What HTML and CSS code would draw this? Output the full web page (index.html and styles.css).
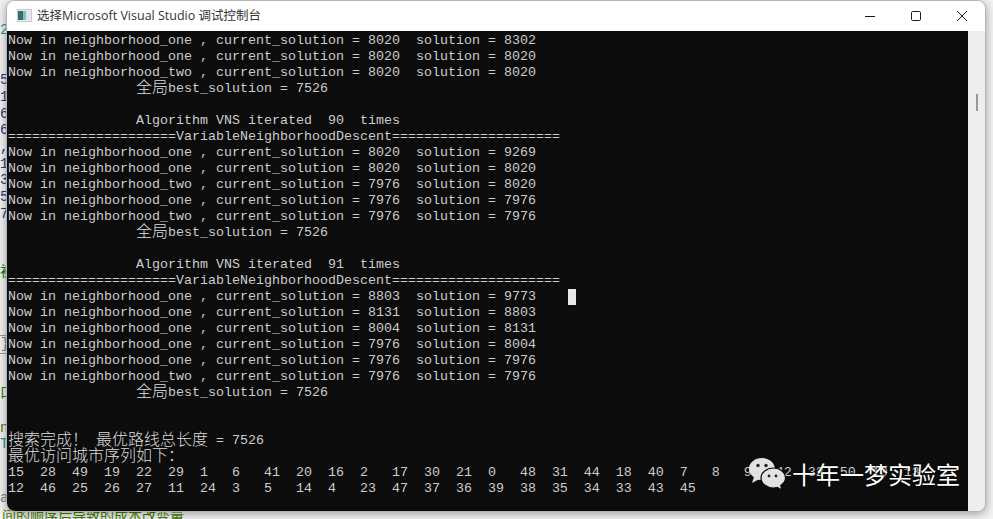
FILE: index.html
```html
<!DOCTYPE html>
<html lang="zh-CN">
<head>
<meta charset="utf-8">
<title>选择Microsoft Visual Studio 调试控制台</title>
<link rel="stylesheet" href="styles.css">
</head>
<body>
<div class="editor">
  <div class="group group-a">
    <div class="g-teal">2</div><div>&nbsp;</div><div>&nbsp;</div>
    <div class="g-navy">5</div><div class="g-navy">1</div><div class="g-navy">6</div><div class="g-navy">6</div>
    <div class="g-navy">,</div><div class="g-navy">1</div><div class="g-navy">3</div><div class="g-navy">5</div><div class="g-navy">7</div>
  </div>
  <div class="group group-b"><div class="g-green">初</div></div>
  <div class="group group-c"><div class="boxed">}</div></div>
  <div class="group group-d"><div class="g-green">口</div></div>
  <div class="group group-e"><div class="g-olive">n</div><div class="g-teal">T</div></div>
  <div class="group group-f"><div class="g-gray">a</div></div>
  <div class="group group-g"><div class="comment">间的顺序后导致的成本改变量</div></div>
</div>

<div class="window">
  <div class="titlebar">
    <svg class="app-icon" width="15" height="13" viewBox="0 0 15 13">
      <rect x="0" y="0" width="15" height="13" fill="#c9c9c9"/>
      <rect x="1" y="1" width="13" height="11" fill="#e8eef0"/>
      <rect x="1" y="2" width="5" height="9" fill="#2f6f78"/>
      <rect x="6" y="2" width="3" height="9" fill="#8fb9bc"/>
      <rect x="9" y="2" width="4" height="9" fill="#dfe8e8"/>
    </svg>
    <span class="title-text">选择Microsoft Visual Studio 调试控制台</span>
    <div class="controls">
      <svg class="ctl" width="46" height="20" viewBox="0 0 46 20"><path d="M18 10.5h10" stroke="#1a1a1a" fill="none"/></svg>
      <svg class="ctl" width="46" height="20" viewBox="0 0 46 20"><rect x="18.5" y="5.5" width="9" height="9" rx="1.2" stroke="#1a1a1a" fill="none"/></svg>
      <svg class="ctl" width="46" height="20" viewBox="0 0 46 20"><path d="M18 5l10 10M28 5L18 15" stroke="#1a1a1a" fill="none"/></svg>
    </div>
  </div>
  <div class="content">
<pre class="console">Now in neighborhood_one , current_solution = 8020  solution = 8302
Now in neighborhood_one , current_solution = 8020  solution = 8020
Now in neighborhood_two , current_solution = 8020  solution = 8020
                <span class="cjk">全局</span>best_solution = 7526

                Algorithm VNS iterated  90  times
=====================VariableNeighborhoodDescent=====================
Now in neighborhood_one , current_solution = 8020  solution = 9269
Now in neighborhood_one , current_solution = 8020  solution = 8020
Now in neighborhood_two , current_solution = 7976  solution = 8020
Now in neighborhood_one , current_solution = 7976  solution = 7976
Now in neighborhood_two , current_solution = 7976  solution = 7976
                <span class="cjk">全局</span>best_solution = 7526

                Algorithm VNS iterated  91  times
=====================VariableNeighborhoodDescent=====================
Now in neighborhood_one , current_solution = 8803  solution = 9773    <span class="cursor"> </span>
Now in neighborhood_one , current_solution = 8131  solution = 8803
Now in neighborhood_one , current_solution = 8004  solution = 8131
Now in neighborhood_one , current_solution = 7976  solution = 8004
Now in neighborhood_one , current_solution = 7976  solution = 7976
Now in neighborhood_two , current_solution = 7976  solution = 7976
                <span class="cjk">全局</span>best_solution = 7526


<span class="cjk">搜索完成！</span> <span class="cjk">最优路线总长度</span> = 7526
<span class="cjk">最优访问城市序列如下：</span>
15  28  49  19  22  29  1   6   41  20  16  2   17  30  21  0   48  31  44  18  40  7   8   9   42  32  50  10  13
12  46  25  26  27  11  24  3   5   14  4   23  47  37  36  39  38  35  34  33  43  45
</pre>
    <div class="scrollbar"><div class="thumb"></div></div>
  </div>
  <div class="watermark">
    <svg class="wechat" width="40" height="36" viewBox="0 0 40 36">
      <path d="M15 2C7.800 2 2 6.800 2 12.800c0 3.400 1.900 6.400 4.900 8.400L5 27l6-3.200c1.300.3 2.600.5 4 .5 7.200 0 13-4.900 13-11S22.200 2 15 2z" fill="#e2e2e2"/>
      <path d="M26.500 12C19.600 12 14 16.500 14 22s5.600 10 12.500 10c1.300 0 2.500-.2 3.700-.5L35 34l-1.300-4.600c2.800-1.800 4.800-4.500 4.800-7.400 0-5.500-5.200-10-12-10z" fill="#e2e2e2" stroke="#0c0c0c" stroke-width="1.200"/>
      <circle cx="11" cy="9.500" r="1.700" fill="#222"/><circle cx="19" cy="9.500" r="1.700" fill="#222"/>
      <circle cx="22" cy="20" r="1.400" fill="#222"/><circle cx="29" cy="20" r="1.400" fill="#222"/>
    </svg>
    <span class="wm-text">十年一梦实验室</span>
  </div>
</div>
</body>
</html>
```
FILE: styles.css
```css
* { box-sizing: border-box; }
html, body { margin: 0; height: 100%; }
body {
  position: relative;
  width: 993px;
  height: 519px;
  overflow: hidden;
  background: #f3f3f3;
}

/* editor peeking out behind the console window */
.editor {
  position: absolute;
  inset: 0;
  padding-top: 22px;
  font-family: "Liberation Mono", "Noto Sans CJK SC", monospace;
  font-size: 14px;
  line-height: 16.7px;
}
.group-b { margin-top: 42px; }
.group-c { margin-top: 54px; }
.group-d { margin-top: 31px; }
.group-e { margin-top: 18px; }
.group-f { margin-top: 37px; }
.g-teal { color: #2b91af; }
.g-navy { color: #1f3a7a; }
.g-green { color: #0f7a0f; }
.g-olive { color: #4f7a20; }
.g-gray { color: #808080; }
.boxed { color: #777; border: 1px solid #999; border-left: 0; width: 14px; padding-left: 1px; }
.comment {
  padding-left: 2px;
  color: #3f7f00;
  font-family: "Noto Sans CJK SC", sans-serif;
  font-size: 14px;
}

/* console window */
.window {
  position: absolute;
  left: 7px;
  top: 1px;
  width: 978px;
  height: 510px;
  display: flex;
  flex-direction: column;
  border-radius: 8px;
  overflow: hidden;
  background: #fff;
  box-shadow: 0 0 0 1px #b4b4b4, 0 2px 8px 2px rgba(0, 0, 0, .3);
}
.titlebar {
  flex: none;
  height: 30px;
  display: flex;
  align-items: center;
  padding-left: 10px;
  padding-bottom: 1px;
  background: #fff;
  color: #333;
}
.app-icon { flex: none; margin-right: 5px; }
.title-text {
  font-family: "Open Sans", "Noto Sans CJK SC", sans-serif;
  font-size: 12.5px;
  line-height: 18px;
  white-space: nowrap;
}
.controls { margin-left: auto; display: flex; }
.ctl { display: block; }
.content { flex: 1; display: flex; min-height: 0; }
.console {
  flex: 1;
  margin: 0;
  padding: 2px 0 0 1px;
  overflow: hidden;
  background: #0c0c0c;
  color: #cccccc;
  font-family: "Liberation Mono", monospace;
  font-size: 13.333px;
  line-height: 16px;
}
.cjk {
  font-family: "Noto Sans CJK SC", sans-serif;
  font-size: 16px;
  font-weight: 300;
  line-height: 0;
  vertical-align: -1px;
  color: #dddddd;
}
.cursor { background: #e8e8e8; display: inline-block; width: 8px; height: 16px; vertical-align: top; }
.scrollbar {
  flex: none;
  width: 17px;
  background: #eeeeee;
  padding-top: 63px;
  padding-left: 8px;
}
.thumb { width: 2px; height: 17px; background: #999; }

.watermark {
  position: absolute;
  left: 740px;
  top: 455px;
  display: flex;
  align-items: center;
  gap: 5px;
}
.wechat { flex: none; display: block; }
.wm-text {
  font-family: "Noto Sans CJK SC", sans-serif;
  font-size: 24px;
  line-height: 36px;
  color: #fff;
  text-shadow: 0 0 2px #000;
}
```
